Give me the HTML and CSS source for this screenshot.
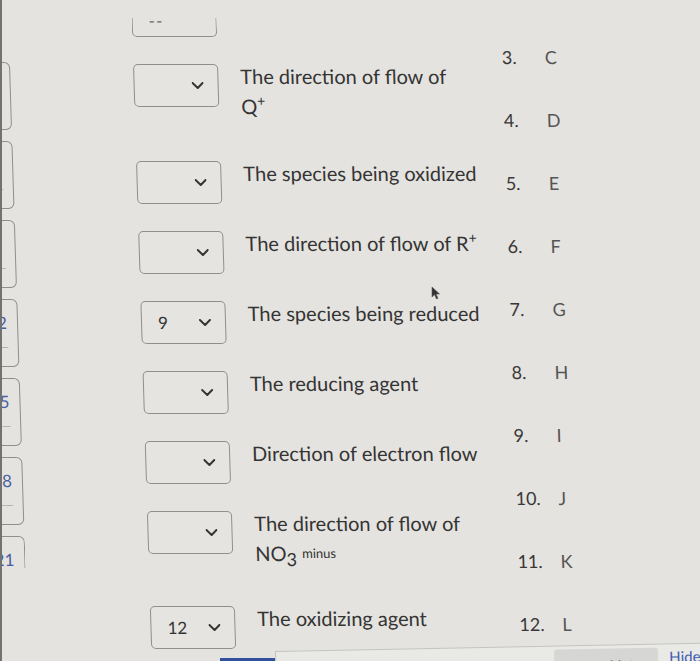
FILE: index.html
```html
<!DOCTYPE html>
<html lang="en">
<head>
<meta charset="utf-8">
<title>Matching</title>
<link rel="stylesheet" href="styles.css">
</head>
<body>
<div class="edge"></div>
<div class="page">
  <div class="side">
    <div class="stub"></div>
    <div class="stub"><span class="num"></span><span class="dash">&mdash;&mdash;</span></div>
    <div class="stub"><span class="num"></span><span class="dash">&mdash;&mdash;</span></div>
    <div class="stub"><span class="num">2</span><span class="dash">&mdash;&mdash;</span></div>
    <div class="stub"><span class="num">5</span><span class="dash">&mdash;&mdash;</span></div>
    <div class="stub"><span class="num">8</span><span class="dash">&mdash;&mdash;</span></div>
    <div class="stub cut"><span class="num">21</span></div>
  </div>

  <div class="main">
    <div class="row">
      <div class="select partial"><span class="ph">--</span></div>
    </div>
    <div class="row tall">
      <div class="select"><span class="val"></span><svg class="chev" viewBox="0 0 12 7"><path d="M1 1 L6 6 L11 1" /></svg></div>
      <div class="label">The direction of flow of<br>Q<sup class="sp">+</sup></div>
    </div>
    <div class="row">
      <div class="select"><span class="val"></span><svg class="chev" viewBox="0 0 12 7"><path d="M1 1 L6 6 L11 1" /></svg></div>
      <div class="label">The species being oxidized</div>
    </div>
    <div class="row">
      <div class="select"><span class="val"></span><svg class="chev" viewBox="0 0 12 7"><path d="M1 1 L6 6 L11 1" /></svg></div>
      <div class="label">The direction of flow of R<sup class="sp">+</sup></div>
    </div>
    <div class="row">
      <div class="select"><span class="val">9</span><svg class="chev" viewBox="0 0 12 7"><path d="M1 1 L6 6 L11 1" /></svg></div>
      <div class="label">The species being reduced</div>
    </div>
    <div class="row">
      <div class="select"><span class="val"></span><svg class="chev" viewBox="0 0 12 7"><path d="M1 1 L6 6 L11 1" /></svg></div>
      <div class="label">The reducing agent</div>
    </div>
    <div class="row">
      <div class="select"><span class="val"></span><svg class="chev" viewBox="0 0 12 7"><path d="M1 1 L6 6 L11 1" /></svg></div>
      <div class="label">Direction of electron flow</div>
    </div>
    <div class="row tall2">
      <div class="select"><span class="val"></span><svg class="chev" viewBox="0 0 12 7"><path d="M1 1 L6 6 L11 1" /></svg></div>
      <div class="label">The direction of flow of<br>NO<sub class="sb">3</sub> <sup class="word">minus</sup></div>
    </div>
    <div class="row">
      <div class="select"><span class="val">12</span><svg class="chev" viewBox="0 0 12 7"><path d="M1 1 L6 6 L11 1" /></svg></div>
      <div class="label">The oxidizing agent</div>
    </div>
  </div>

  <ol class="answers">
    <li><span class="n">3.</span><span class="l">C</span></li>
    <li><span class="n">4.</span><span class="l">D</span></li>
    <li><span class="n">5.</span><span class="l">E</span></li>
    <li><span class="n">6.</span><span class="l">F</span></li>
    <li><span class="n">7.</span><span class="l">G</span></li>
    <li><span class="n">8.</span><span class="l">H</span></li>
    <li><span class="n">9.</span><span class="l">I</span></li>
    <li><span class="n">10.</span><span class="l">J</span></li>
    <li><span class="n">11.</span><span class="l">K</span></li>
    <li><span class="n">12.</span><span class="l">L</span></li>
  </ol>
</div>

<svg class="cursor" viewBox="0 0 10 14"><path d="M1 1 L1 11 L3.5 8.6 L5.5 13 L7 12.3 L5 8 L8.5 8 Z" /></svg>

<div class="tabline"></div>
<div class="footer">
  <div class="fbtn">Show hints</div>
  <a class="hide">Hide</a>
</div>
</body>
</html>
```

FILE: styles.css
```css
html, body {
  margin: 0;
  padding: 0;
}

body {
  width: 700px;
  height: 661px;
  overflow: hidden;
  position: relative;
  background: #e4e3df;
  font-family: Lato, "Open Sans", "Liberation Sans", sans-serif;
  color: #343434;
}

.edge {
  position: absolute;
  left: 0;
  top: 0;
  bottom: 0;
  width: 2px;
  background: #727270;
  z-index: 5;
}

.page {
  display: flex;
  align-items: flex-start;
  transform: skewX(1.78deg);
  transform-origin: 0 0;
}

/* partially visible column on the left */
.side {
  flex: none;
  width: 9px;
  padding-top: 62px;
  display: flex;
  flex-direction: column;
  gap: 11px;
}

.stub {
  box-sizing: border-box;
  width: 80px;
  margin-left: -72px;
  height: 68px;
  border: 1.5px solid #8f8f8d;
  border-radius: 6px;
  padding: 11px 10px 0 0;
  text-align: right;
  font-size: 17px;
  line-height: 24px;
  color: #4a5fa3;
}

.stub .num {
  display: block;
  height: 24px;
}

.stub .dash {
  display: block;
  color: #8d8d8d;
  font-size: 11px;
  letter-spacing: -1px;
}

.stub.cut {
  height: 32px;
  border-bottom: none;
  border-radius: 6px 6px 0 0;
}

/* main rows */
.main {
  flex: none;
  box-sizing: border-box;
  width: 491px;
  padding-left: 122px;
  margin-top: -6px;
}

.row {
  display: flex;
  align-items: flex-start;
  min-height: 70px;
}

.row.tall {
  min-height: 97px;
}

.row.tall2 {
  min-height: 95px;
}

.select {
  flex: none;
  box-sizing: border-box;
  width: 85px;
  height: 43px;
  border: 1.5px solid #8f8f8d;
  border-radius: 5px;
  display: flex;
  align-items: center;
  padding-left: 16px;
  font-size: 17px;
  color: #333;
  background: rgba(255, 255, 255, 0.06);
}

.select.partial {
  height: 19px;
  margin-top: 24px;
  border-top: none;
  border-radius: 0 0 5px 5px;
  align-items: flex-start;
  background: none;
}

.select .ph {
  color: #6a6a6a;
  letter-spacing: 1px;
  line-height: 6px;
}

.chev {
  margin-left: auto;
  margin-right: 14px;
  width: 12px;
  height: 7px;
}

.chev path {
  fill: none;
  stroke: #363636;
  stroke-width: 2;
  stroke-linecap: round;
  stroke-linejoin: round;
}

.label {
  margin-left: 22px;
  margin-top: -3px;
  font-size: 20px;
  line-height: 30px;
  white-space: nowrap;
}

.sp {
  font-size: 14px;
  vertical-align: 8px;
  line-height: 0;
}

.sb {
  font-size: 18px;
  vertical-align: -5px;
  line-height: 0;
}

.word {
  font-size: 13px;
  vertical-align: 3px;
  line-height: 0;
}

/* answer bank */
.answers {
  list-style: none;
  margin: 26px 0 0;
  padding: 0;
  font-size: 18px;
}

.answers li {
  display: flex;
  height: 63px;
  line-height: 63px;
}

.answers .n {
  width: 43px;
  color: #383838;
}

.answers .l {
  color: #555;
}

/* overlays */
.cursor {
  position: absolute;
  left: 431px;
  top: 286px;
  width: 10px;
  height: 14px;
}

.cursor path {
  fill: #333;
  stroke: #555;
  stroke-width: 0.6;
}

.tabline {
  position: absolute;
  left: 220px;
  bottom: 0;
  width: 55px;
  height: 3px;
  background: #33509f;
}

.footer {
  position: absolute;
  left: 275px;
  top: 651px;
  width: 440px;
  height: 30px;
  box-sizing: border-box;
  border-top: 1px solid #c3c3c1;
  border-left: 1px solid #c3c3c1;
  background: #e9e9e6;
  transform: rotate(-1.1deg);
  transform-origin: 0 0;
}

.fbtn {
  position: absolute;
  left: 278px;
  top: 3px;
  width: 104px;
  height: 26px;
  background: #d6d6d4;
  border-radius: 3px;
  font-size: 14px;
  color: #555;
  text-align: center;
  line-height: 34px;
}

.hide {
  position: absolute;
  left: 393px;
  top: 2px;
  font-size: 15px;
  color: #3f5db3;
  line-height: 20px;
}
```
